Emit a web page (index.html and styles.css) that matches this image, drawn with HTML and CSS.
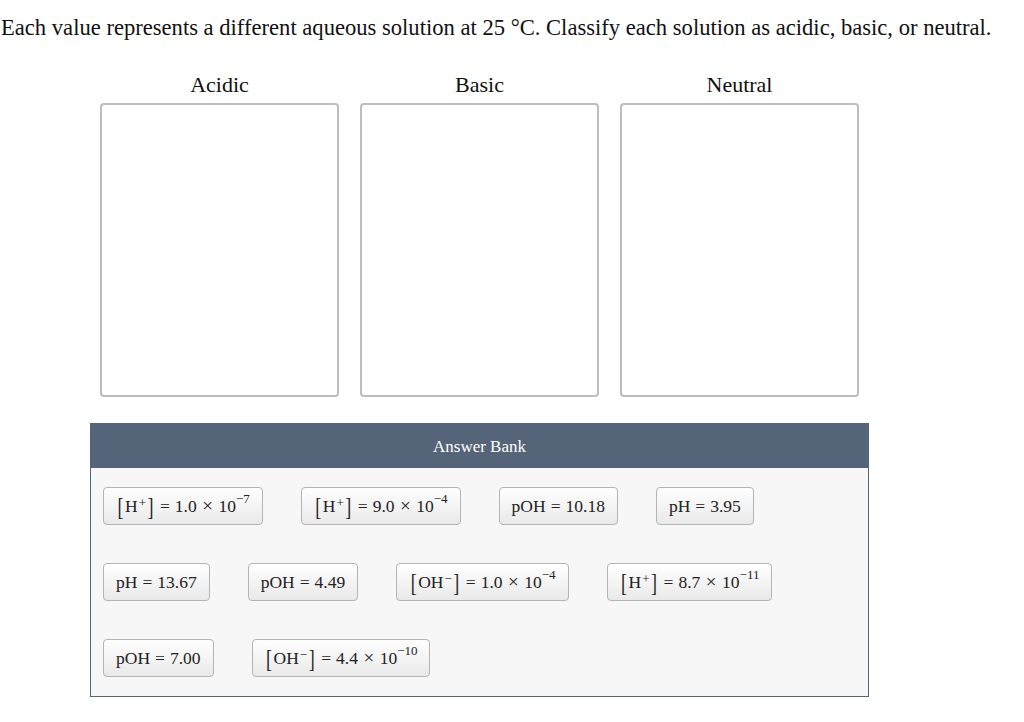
FILE: index.html
```html
<!DOCTYPE html>
<html>
<head>
<meta charset="utf-8">
<link rel="stylesheet" href="styles.css">
</head>
<body>
<p class="prompt">Each value represents a different aqueous solution at 25 °C. Classify each solution as acidic, basic, or neutral.</p>
<div class="cats">
  <div class="cat"><div class="cat-title">Acidic</div><div class="drop"></div></div>
  <div class="cat"><div class="cat-title">Basic</div><div class="drop"></div></div>
  <div class="cat"><div class="cat-title">Neutral</div><div class="drop"></div></div>
</div>
<div class="bank">
  <div class="bank-head">Answer Bank</div>
  <div class="bank-body">
    <div class="row">
      <div class="tile"><span class="m"><span class="br">[</span>H<sup class="ion">+</sup><span class="br">]</span><span class="eq">=</span>1.0<span class="x">×</span>10<sup class="exp">−7</sup></span></div>
      <div class="tile"><span class="m"><span class="br">[</span>H<sup class="ion">+</sup><span class="br">]</span><span class="eq">=</span>9.0<span class="x">×</span>10<sup class="exp">−4</sup></span></div>
      <div class="tile"><span class="m">pOH<span class="eq">=</span>10.18</span></div>
      <div class="tile"><span class="m">pH<span class="eq">=</span>3.95</span></div>
    </div>
    <div class="row">
      <div class="tile"><span class="m">pH<span class="eq">=</span>13.67</span></div>
      <div class="tile"><span class="m">pOH<span class="eq">=</span>4.49</span></div>
      <div class="tile"><span class="m"><span class="br">[</span>OH<sup class="ion">−</sup><span class="br">]</span><span class="eq">=</span>1.0<span class="x">×</span>10<sup class="exp">−4</sup></span></div>
      <div class="tile"><span class="m"><span class="br">[</span>H<sup class="ion">+</sup><span class="br">]</span><span class="eq">=</span>8.7<span class="x">×</span>10<sup class="exp">−11</sup></span></div>
    </div>
    <div class="row">
      <div class="tile"><span class="m">pOH<span class="eq">=</span>7.00</span></div>
      <div class="tile"><span class="m"><span class="br">[</span>OH<sup class="ion">−</sup><span class="br">]</span><span class="eq">=</span>4.4<span class="x">×</span>10<sup class="exp">−10</sup></span></div>
    </div>
  </div>
</div>
</body>
</html>
```
FILE: styles.css
```css
html, body {
  margin: 0;
  padding: 0;
  background: #ffffff;
  color: #111111;
  font-family: "Liberation Serif", "Times New Roman", serif;
}
.prompt {
  margin: 0;
  padding: 15px 0 0 1px;
  font-size: 22.6px;
  line-height: 26px;
  white-space: nowrap;
}
.cats {
  display: flex;
  gap: 21px;
  margin: 32px 0 0 100px;
}
.cat {
  width: 239px;
  display: flex;
  flex-direction: column;
}
.cat-title {
  text-align: center;
  font-size: 22px;
  line-height: 24px;
  height: 30px;
}
.drop {
  height: 294px;
  box-sizing: border-box;
  border: 2px solid #bdbdbd;
  border-radius: 4px;
  background: #ffffff;
}
.bank {
  margin: 26px 0 0 90px;
  width: 779px;
}
.bank-head {
  height: 45px;
  background: #556479;
  color: #ffffff;
  font-size: 17px;
  line-height: 45px;
  text-align: center;
  border: 1px solid #556479;
  border-bottom: none;
  box-sizing: border-box;
}
.bank-body {
  background: #f7f7f7;
  border: 1px solid #556479;
  border-top: none;
  padding: 19px 12px 19px 12px;
  display: flex;
  flex-direction: column;
  gap: 38px;
}
.row {
  display: flex;
  gap: 38px;
}
.tile {
  height: 38px;
  box-sizing: border-box;
  border: 1px solid #b4b4b4;
  border-radius: 4px;
  background: linear-gradient(#ffffff, #e9e9e9);
  display: flex;
  align-items: center;
  padding: 0 12px;
  font-size: 17.5px;
  color: #222222;
  white-space: nowrap;
}
.m {
  display: inline-block;
  line-height: 20px;
}
.eq {
  margin: 0 5px;
}
.x {
  margin: 0 5.5px;
  font-size: 19px;
}
.br {
  font-size: 18px;
  line-height: 0;
  display: inline-block;
  margin: 0 1.5px;
  transform: scaleY(1.45);
}
.ion {
  font-size: 13px;
  vertical-align: 5px;
  line-height: 0;
  margin: 0 0 0 1px;
}
.exp {
  font-size: 13px;
  vertical-align: 9px;
  line-height: 0;
  margin-left: 0;
}
```
